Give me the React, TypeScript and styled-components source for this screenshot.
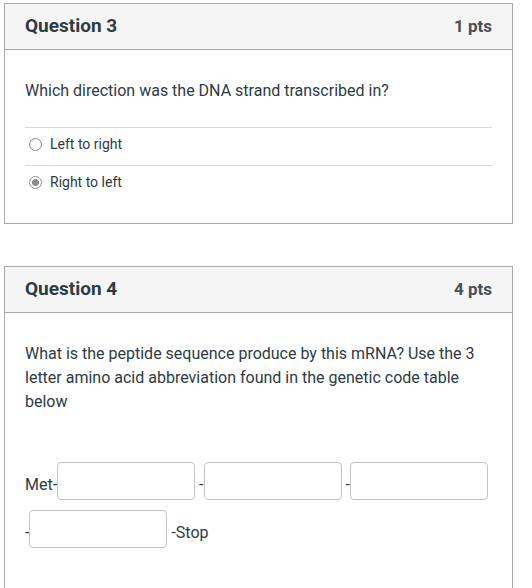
import React from "react";
import styled, { createGlobalStyle } from "styled-components";

const GlobalStyle = createGlobalStyle`
  html, body { margin: 0; padding: 0; background: #ffffff; }
  body {
    font-family: Roboto, "Liberation Sans", Arial, sans-serif;
    color: #2d3b45;
    -webkit-font-smoothing: antialiased;
  }
`;

const Page = styled.div`
  padding: 3px 20px 0 4px;
  display: flex;
  flex-direction: column;
  gap: 42px;
`;

const Card = styled.section`
  width: 509px;
  box-sizing: border-box;
  border: 1px solid #a9a9a9;
  background: #ffffff;
`;

const Header = styled.header`
  height: 45px;
  box-sizing: content-box;
  padding: 0 20px;
  background: #f5f5f5;
  border-bottom: 1px solid #a9a9a9;
  display: flex;
  align-items: center;
  justify-content: space-between;
`;

const Title = styled.h2`
  margin: 0;
  font-size: 19px;
  font-weight: 700;
  color: #2d3b45;
  line-height: 24px;
  padding-bottom: 2px;
`;

const Points = styled.span`
  font-size: 17px;
  font-weight: 700;
  color: #4a4f54;
  line-height: 24px;
  padding-bottom: 2px;
`;

const Body = styled.div<{ $tall?: boolean }>`
  padding: 29px 20px ${(p) => (p.$tall ? "40px" : "20px")};
`;

const Prompt = styled.p`
  margin: 0;
  font-size: 16px;
  line-height: 24px;
  color: #2d3b45;
`;

const Answers = styled.div`
  margin-top: 24px;
  display: flex;
  flex-direction: column;
`;

const AnswerRow = styled.label`
  display: flex;
  align-items: center;
  gap: 8px;
  padding: 4px 0 9px 4px;
  border-top: 1px solid #dadada;
  font-size: 14px;
  line-height: 24px;
  color: #2d3b45;
`;

const Radio = styled.input.attrs({ type: "radio" })`
  appearance: none;
  margin: 0;
  width: 13px;
  height: 13px;
  box-sizing: border-box;
  border-radius: 50%;
  border: 1px solid #8a8a8a;
  background: #ffffff;
  flex: none;
  &:checked {
    border-color: #8c8c8c;
    background: radial-gradient(circle, #8c8c8c 0 3.3px, #ffffff 3.8px);
  }
`;

const Blanks = styled.p`
  margin: 48px 0 0;
  font-size: 16px;
  line-height: 24px;
  color: #2d3b45;
`;

const Blank = styled.input.attrs({ type: "text" })`
  display: inline-block;
  width: 138px;
  height: 38px;
  box-sizing: border-box;
  margin: 0 0 10px;
  padding: 0 8px;
  border: 1px solid #c4c4c4;
  border-radius: 4px;
  background: #ffffff;
  vertical-align: middle;
  font: inherit;
  color: #2d3b45;
  outline: none;
`;

export default function App() {
  return (
    <>
      <GlobalStyle />
      <Page>
        <Card>
          <Header>
            <Title>Question 3</Title>
            <Points>1 pts</Points>
          </Header>
          <Body>
            <Prompt>Which direction was the DNA strand transcribed in?</Prompt>
            <Answers>
              <AnswerRow>
                <Radio name="q3" />
                Left to right
              </AnswerRow>
              <AnswerRow>
                <Radio name="q3" defaultChecked />
                Right to left
              </AnswerRow>
            </Answers>
          </Body>
        </Card>
        <Card>
          <Header>
            <Title>Question 4</Title>
            <Points>4 pts</Points>
          </Header>
          <Body $tall>
            <Prompt>
              What is the peptide sequence produce by this mRNA? Use the 3
              letter amino acid abbreviation found in the genetic code table
              below
            </Prompt>
            <Blanks>
              Met-<Blank /> -<Blank /> -<Blank /> -<Blank /> -Stop
            </Blanks>
          </Body>
        </Card>
      </Page>
    </>
  );
}
